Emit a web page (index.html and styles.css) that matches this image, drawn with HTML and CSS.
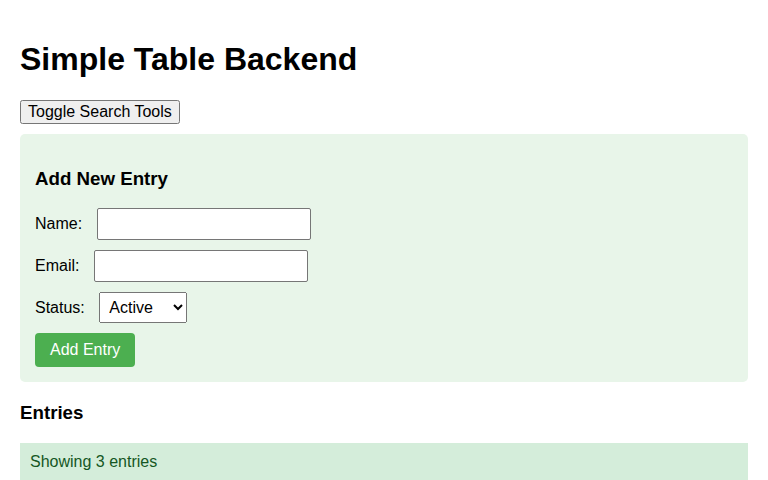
FILE: index.html
```html
<!DOCTYPE html>
<html lang="en">
<head>
    <meta charset="UTF-8">
    <meta name="viewport" content="width=device-width, initial-scale=1.0">
    <title>Simple Table Backend</title>
    <link rel="stylesheet" href="styles.css">
</head>
<body>
    <h1>Simple Table Backend</h1>

    <button class="toggle-btn">Toggle Search Tools</button>

    <div class="add-form">
        <h3>Add New Entry</h3>
        <div class="form-row">
            <label for="name">Name:</label>
            <input type="text" id="name">
        </div>
        <div class="form-row">
            <label for="email">Email:</label>
            <input type="email" id="email">
        </div>
        <div class="form-row">
            <label for="status">Status:</label>
            <select id="status">
                <option>Active</option>
                <option>Inactive</option>
            </select>
        </div>
        <button class="add-btn">Add Entry</button>
    </div>

    <h3>Entries</h3>
    <div class="info-bar">Showing 3 entries</div>
</body>
</html>
```

FILE: styles.css
```css
body {
    font-family: "Liberation Sans", Arial, sans-serif;
    margin: 0;
    padding: 20px;
    color: #000;
}

h1 {
    font-size: 32px;
}

h3 {
    font-size: 18.72px;
}

.toggle-btn {
    font-family: inherit;
    font-size: 16px;
}

.add-form {
    background-color: #e8f5e9;
    padding: 15px;
    margin: 10px 0 20px;
    border-radius: 5px;
}

.form-row {
    margin-bottom: 10px;
}

.form-row label {
    font-size: 16px;
    margin-right: 10px;
}

.form-row input {
    font-family: inherit;
    font-size: 16px;
    width: 200px;
    padding: 6px;
    border: 1px solid #767676;
    border-radius: 2px;
}

.form-row select {
    font-family: inherit;
    font-size: 16px;
    padding: 5px;
}

.add-btn {
    font-family: inherit;
    font-size: 16px;
    background-color: #4caf50;
    color: white;
    border: none;
    border-radius: 4px;
    padding: 8px 15px;
    cursor: pointer;
}

.add-btn:hover {
    background-color: #45a049;
}

.info-bar {
    background-color: #d4edda;
    color: #155724;
    padding: 10px;
}
```
